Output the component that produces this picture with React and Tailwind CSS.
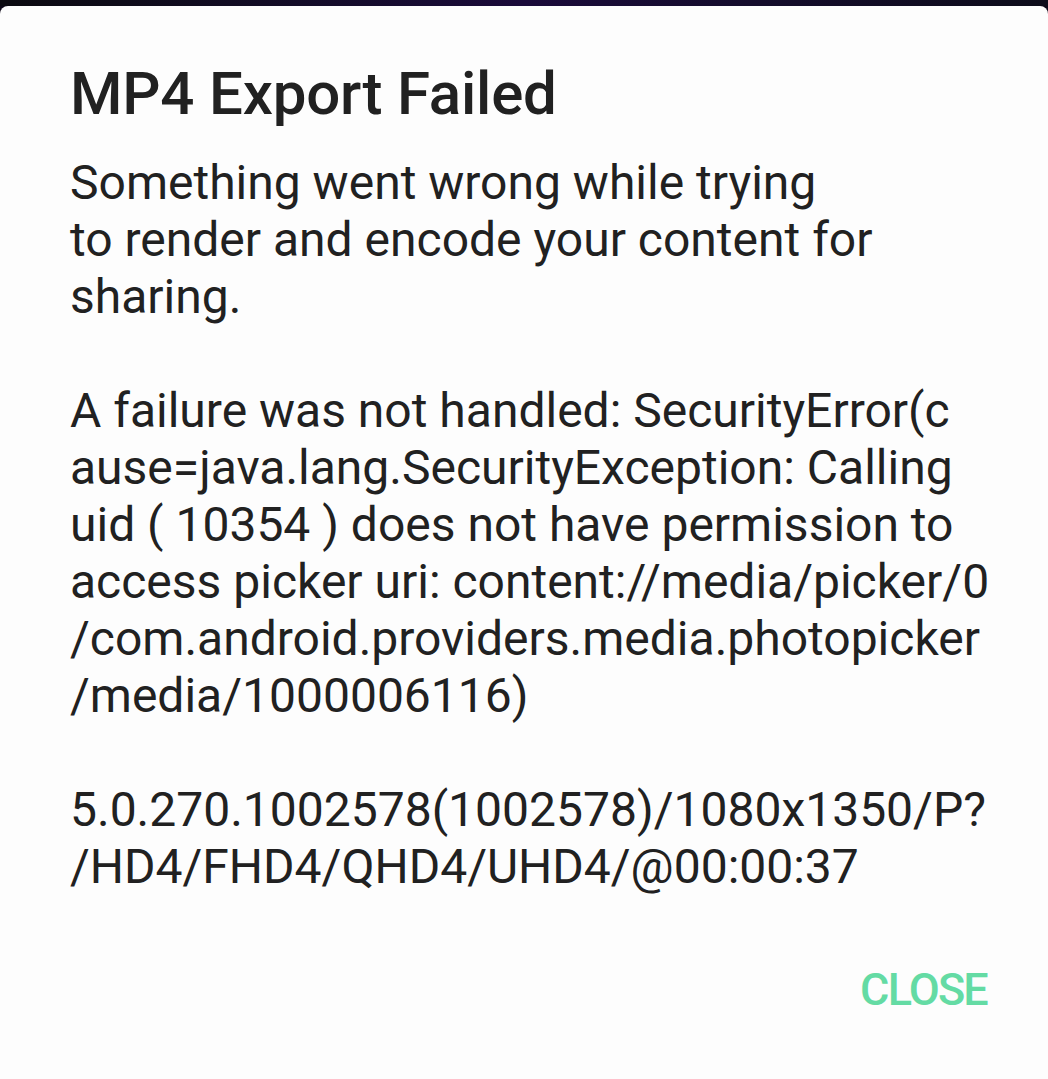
export default function App() {
  const font = { fontFamily: "Roboto, 'Noto Sans', sans-serif" };
  return (
    <div className="w-[1048px] h-[1079px] bg-[#0d0818] flex flex-col overflow-hidden" style={font}>
      <div className="h-[6px] shrink-0 bg-gradient-to-r from-[#0b0a10] via-[#1a0a3a] to-[#0d0c1a]" />
      <div className="flex-1 bg-[#fdfdfd] rounded-t-[8px] flex flex-col pl-[70px] pr-[61px]">
        <h1 className="mt-[52px] text-[60px] leading-[72px] font-medium text-[#212121] tracking-[-0.2px]">MP4 Export Failed</h1>
        <div className="mt-[24px] text-[48px] leading-[57px] text-[#212121] whitespace-nowrap">
          <div>Something went wrong while trying</div>
          <div>to render and encode your content for</div>
          <div>sharing.</div>
          <div className="h-[57px]" />
          <div>A failure was not handled: SecurityError(c</div>
          <div>ause=java.lang.SecurityException: Calling</div>
          <div>uid ( 10354 ) does not have permission to</div>
          <div>access picker uri: content://media/picker/0</div>
          <div>/com.android.providers.media.photopicker</div>
          <div>/media/1000006116)</div>
          <div className="h-[57px]" />
          <div>5.0.270.1002578(1002578)/1080x1350/P?</div>
          <div>/HD4/FHD4/QHD4/UHD4/@00:00:37</div>
        </div>
        <div className="mt-[67px] flex justify-end">
          <button className="text-[45px] leading-[56px] font-medium tracking-[-1.8px] text-[#64dba4]">CLOSE</button>
        </div>
      </div>
    </div>
  );
}
